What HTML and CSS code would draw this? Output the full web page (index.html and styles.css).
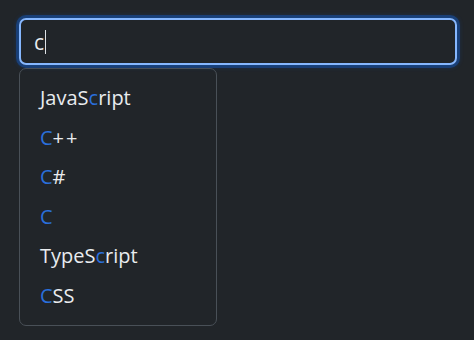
FILE: index.html
```html
<!DOCTYPE html>
<html lang="en">
<head>
    <meta charset="UTF-8">
    <title>Autocomplete</title>
    <link rel="stylesheet" href="styles.css">
</head>
<body>
    <div class="search-box">
        <div class="search-input"><span class="typed">c</span><span class="caret"></span></div>

        <ul class="suggestions">
            <li>JavaS<mark>c</mark>ript</li>
            <li><mark>C</mark><span class="wide">++</span></li>
            <li><mark>C</mark>#</li>
            <li><mark>C</mark></li>
            <li>TypeS<mark>c</mark>ript</li>
            <li><mark>C</mark>SS</li>
        </ul>
    </div>
</body>
</html>
```

FILE: styles.css
```css
body {
    margin: 0;
    background: #212529;
    font-family: 'Open Sans', 'Noto Sans', sans-serif;
    color: #e9ecef;
}

.search-box {
    padding: 18px 17px 0 19px;
}

.search-input {
    display: flex;
    align-items: center;
    height: 47px;
    box-sizing: border-box;
    padding: 0 13px;
    border: 2px solid #86b7fe;
    border-radius: 7px;
    box-shadow: 0 0 0 3px rgba(13, 110, 253, 0.3), 0 0 4px 3px rgba(13, 110, 253, 0.15);
    font-size: 21px;
}

.caret {
    display: inline-block;
    width: 1px;
    height: 24px;
    margin-left: 1px;
    background: #dee2e6;
}

.suggestions {
    list-style: none;
    margin: 3px 0 0;
    padding: 9px 0 10px;
    width: 198px;
    box-sizing: border-box;
    border: 1px solid #495057;
    border-radius: 7px;
}

.suggestions li {
    height: 39.5px;
    line-height: 39.5px;
    padding-left: 20px;
    font-size: 20px;
}

.wide {
    letter-spacing: 2px;
}

mark {
    background: none;
    color: #2a6fdb;
}
```
